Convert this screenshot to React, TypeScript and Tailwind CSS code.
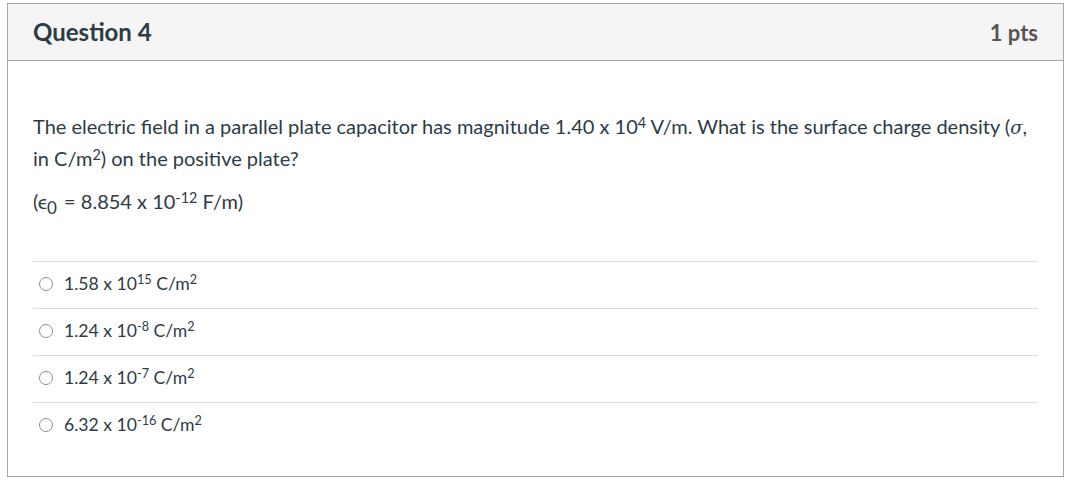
import React from "react";

const answers: { base: string; exp: string }[] = [
  { base: "1.58 x 10", exp: "15" },
  { base: "1.24 x 10", exp: "-8" },
  { base: "1.24 x 10", exp: "-7" },
  { base: "6.32 x 10", exp: "-16" },
];

const Sup: React.FC<{ children: React.ReactNode }> = ({ children }) => (
  <sup className="relative top-[-0.45em] align-baseline text-[0.72em] leading-none">
    {children}
  </sup>
);

const App: React.FC = () => {
  return (
    <div className="h-[482px] w-[1070px] bg-white pt-[3px] pl-[7px] font-['Lato',_'Liberation_Sans',_sans-serif] text-[#2d3b45]">
      <div className="flex h-[474px] w-[1057px] flex-col border border-[#a5a5a5]">
        <div className="flex h-[57px] items-center justify-between border-b border-[#a5a5a5] bg-[#f5f5f5] pr-[25px] pl-[25px]">
          <h2 className="text-[24px] font-bold">Question 4</h2>
          <span className="text-[22px] font-bold text-[#555]">1 pts</span>
        </div>

        <div className="px-[25px] pt-[50px]">
          <p className="text-[20px] leading-[30px]">
            The electric ﬁeld in a parallel plate capacitor has magnitude 1.40 x 10
            <Sup>4</Sup> V/m. What is the surface charge density (
            <span className="font-['DejaVu_Serif',_serif] text-[18px] italic">σ</span>, in C/m
            <Sup>2</Sup>) on the positive plate?
          </p>
          <p className="mt-[13px] text-[20px] leading-[30px]">
            (ϵ<sub className="relative top-[0.3em] align-baseline text-[0.85em]">0</sub>{" "}
            <span className="ml-[2px]">=</span> 8.854 x 10
            <Sup>-12</Sup> F/m)
          </p>

          <div className="mt-[45px]">
            {answers.map((a, i) => (
              <div
                key={i}
                className="flex h-[47px] items-center border-t border-[#dcdcdc] pb-[2px] pl-[6px] text-[17.6px]"
              >
                <span className="mr-[11px] size-[14px] rounded-full border border-[#8f8f8f] bg-white" />
                <span>
                  {a.base}
                  <Sup>{a.exp}</Sup> C/m<Sup>2</Sup>
                </span>
              </div>
            ))}
          </div>
        </div>
      </div>
    </div>
  );
};

export default App;
